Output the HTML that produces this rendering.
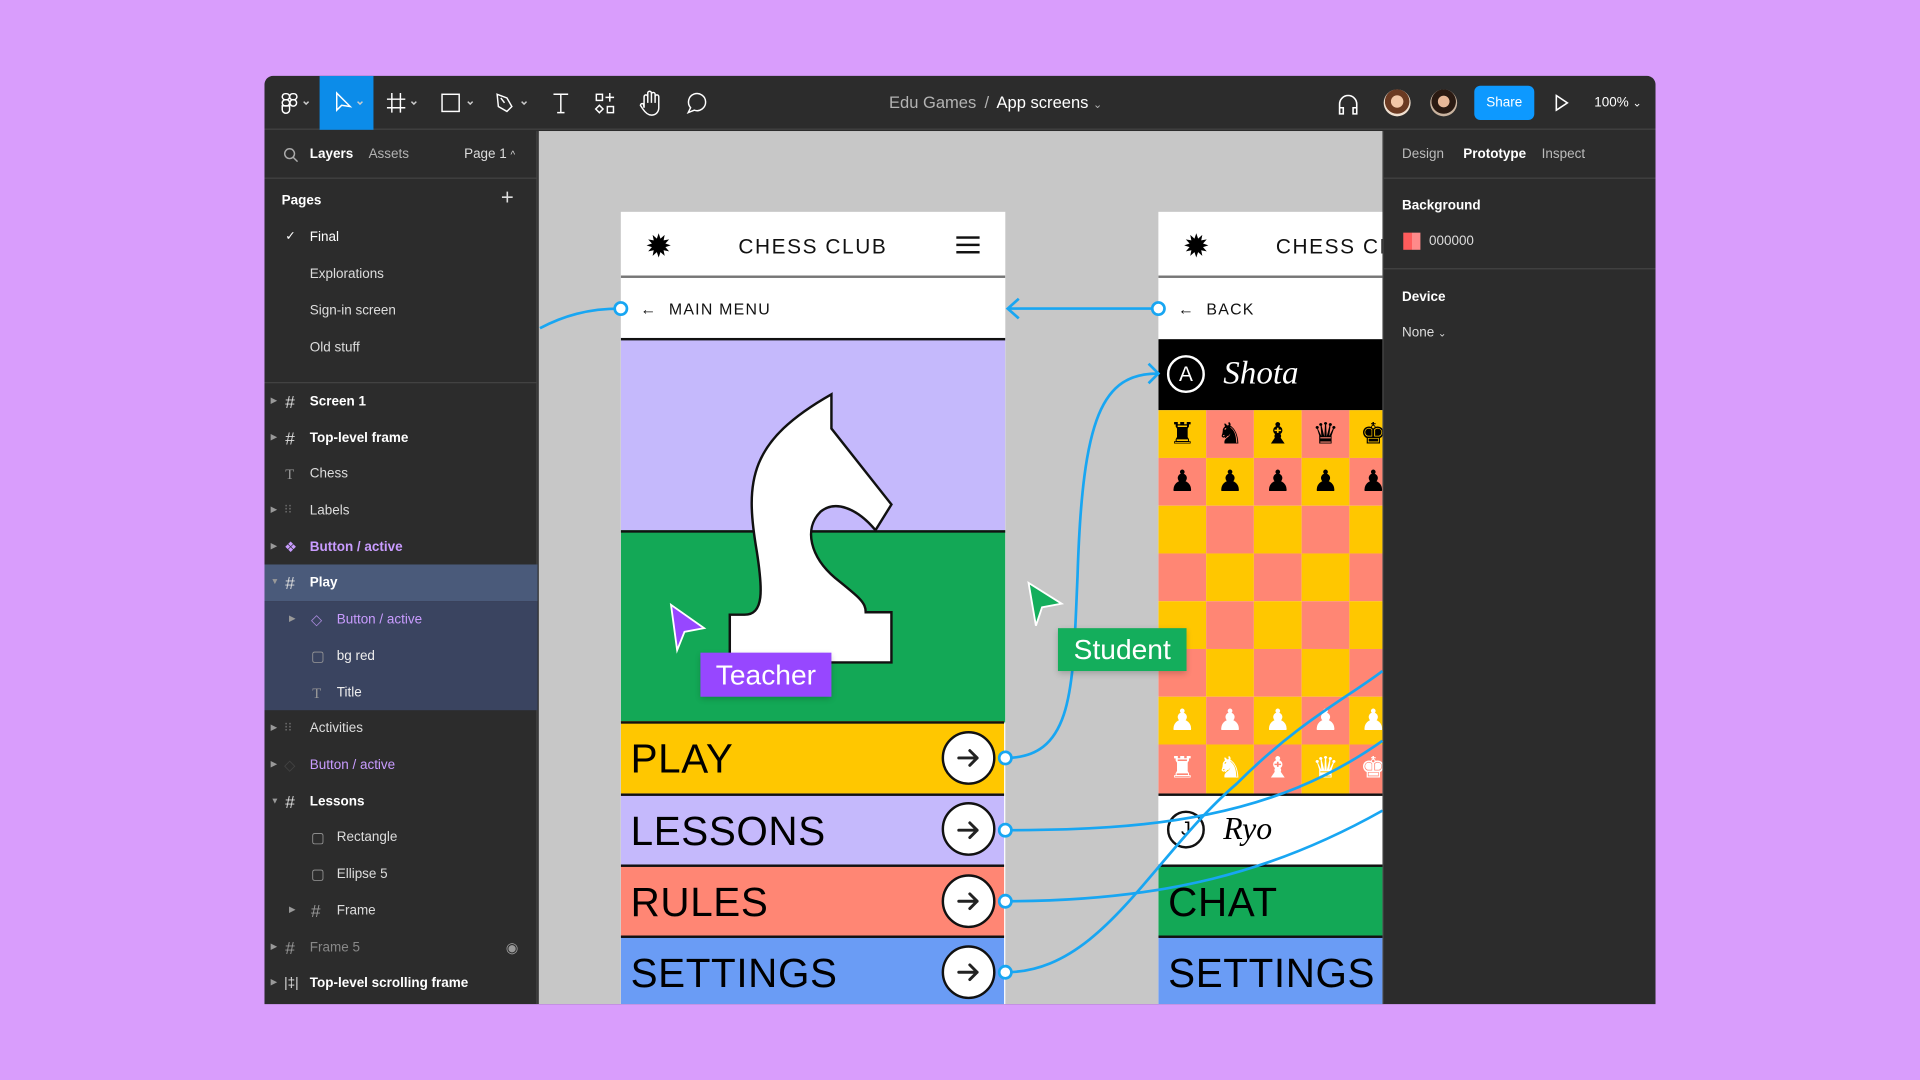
<!DOCTYPE html>
<html><head><meta charset="utf-8"><style>
*{box-sizing:border-box;margin:0;padding:0}
html,body{width:1920px;height:1080px;overflow:hidden;background:#d99dfc}
#s{position:absolute;left:0;top:0;width:1568px;height:882px;transform:scale(1.22449);transform-origin:0 0;font-family:"Liberation Sans",sans-serif}
.a{position:absolute;white-space:nowrap}
.win{left:216px;top:62px;width:1136px;height:758px;background:#2c2c2c;border-radius:7px 7px 0 0;overflow:hidden}
.t{color:#fff;font-size:11px;white-space:nowrap}
.g{color:#b3b3b3}
.b{font-weight:bold}
.p{color:#c99cff}
.row{position:absolute;left:0;width:223px;height:30px;line-height:30px;font-size:11px;color:#fff}
.ico{position:absolute;font-size:12px;color:#999}
.bar{position:absolute;left:0;width:313px;color:#000;font-size:33px;padding-left:8px;border-top:2px solid #111;letter-spacing:0.5px}
.circ{position:absolute;width:44px;height:44px;border-radius:50%;background:#fff;border:2px solid #111}
.sq{position:absolute;width:39px;height:39px;text-align:center;line-height:39px;font-size:24px;font-family:"DejaVu Sans",sans-serif}
</style></head><body><div id="s">
<div class="a win">
 <div class="a" style="left:0;top:0;width:1136px;height:44px;border-bottom:1px solid #444"></div>
 <div class="a" style="left:45px;top:0;width:44px;height:44px;background:#0c8ce9"></div>
 <svg class="a" style="left:0;top:0" width="380" height="44" fill="none" stroke="#fff" stroke-width="1.2">
  <g transform="translate(14,14)"><rect x="0.5" y="0.5" width="6" height="5" rx="2.5"/><rect x="6.5" y="0.5" width="6" height="5" rx="2.5"/><rect x="0.5" y="5.5" width="6" height="5" rx="2.5"/><circle cx="9.5" cy="8" r="2.7"/><path d="M0.5 10.5h6v3a3 3 0 0 1-6 0z"/></g>
  <path d="M32 21l2 2 2-2M76 21l2 2 2-2M120 21l2 2 2-2M166 21l2 2 2-2M210 21l2 2 2-2" stroke="#ccc"/>
  <path d="M59 14l0 14 4-4 7 1z"/>
  <path d="M104 14v16M111 14v16M100 19h15M100 26h15"/>
  <rect x="145" y="15" width="14" height="14"/>
  <path d="M190 15l8 3 4 7-4 4-7-4z M193 18l3 4"/>
  <path d="M236 15h12M242 15v15M239 30h6"/>
  <rect x="271" y="15" width="5" height="5"/><path d="M282 14v7M278.5 17.5h7M273.5 24l3 3-3 3-3-3z"/><rect x="280" y="25" width="5" height="5"/>
  <path d="M310 26v-9a1.5 1.5 0 0 1 3 0v5v-8a1.5 1.5 0 0 1 3 0v8v-7a1.5 1.5 0 0 1 3 0v7v-5a1.5 1.5 0 0 1 3 0v9c0 4-3 6-6 6s-5-2-7-5l-2-3a1.5 1.5 0 0 1 2.5-1z"/>
  <path d="M346 30l2-4a7 7 0 1 1 3 2z"/>
 </svg>
 <div class="a t" style="left:510px;top:14px;font-size:13.5px;color:#b3b3b3">Edu Games <span style="margin:0 3px">/</span> <span style="color:#fff">App screens</span> <span style="font-size:9px">⌄</span></div>
 <svg class="a" style="left:870px;top:10px" width="80" height="26" fill="none" stroke="#fff" stroke-width="1.3"><path d="M8 19v-6a7 7 0 0 1 14 0v6M8 16h3v5h-3zM19 16h3v5h-3z"/></svg>
 <div class="a" style="left:914px;top:11px;width:22px;height:22px;border-radius:50%;background:radial-gradient(circle at 50% 45%,#f2c7a8 0 30%,#6b3a22 32% 60%,#f0e0d0 62%)"></div>
 <div class="a" style="left:952px;top:11px;width:22px;height:22px;border-radius:50%;background:radial-gradient(circle at 50% 45%,#e8b898 0 28%,#2a1a12 30% 60%,#c9b39f 62%)"></div>
 <div class="a t" style="left:988px;top:8px;width:49px;height:28px;background:#0d99ff;border-radius:5px;text-align:center;line-height:28px;font-size:11px">Share</div>
 <svg class="a" style="left:1052px;top:15px" width="14" height="14" fill="none" stroke="#fff" stroke-width="1.3"><path d="M3 1l9 6-9 6z"/></svg>
 <div class="a t" style="left:1086px;top:16px">100% <span style="font-size:9px">⌄</span></div>

 <div class="a" style="left:0;top:45px;width:223px;height:713px;border-right:1px solid #444">
  <svg class="a" style="left:15px;top:13px" width="14" height="14" fill="none" stroke="#aaa" stroke-width="1.2"><circle cx="5.5" cy="5.5" r="4"/><path d="M8.5 8.5l3.5 3.5"/></svg>
  <div class="a t b" style="left:37px;top:13px">Layers</div>
  <div class="a t g" style="left:85px;top:13px">Assets</div>
  <div class="a t" style="left:163px;top:13px;color:#ddd">Page 1 <span style="font-size:8px">^</span></div>
  <div class="a" style="left:0;top:38px;width:223px;border-top:1px solid #444"></div>
  <div class="a t b" style="left:14px;top:51px">Pages</div>
  <div class="a t" style="left:193px;top:44px;font-size:18px;color:#ddd">+</div>
  <div class="a t" style="left:17px;top:81px;font-size:10px">✓</div>
  <div class="a t" style="left:37px;top:81px">Final</div>
  <div class="a t" style="left:37px;top:111px;color:#ddd">Explorations</div>
  <div class="a t" style="left:37px;top:141px;color:#ddd">Sign-in screen</div>
  <div class="a t" style="left:37px;top:171px;color:#ddd">Old stuff</div>
  <div class="a" style="left:0;top:205px;width:223px;border-top:1px solid #444"></div>
 </div>
 <div class="a" style="left:0;top:251px;width:223px">
  <div class="row" style="top:0"><span class="ico" style="left:5px;font-size:7px">▶</span><span class="ico" style="left:17px;color:#ddd;font-size:14px">#</span><span class="a b" style="left:37px">Screen 1</span></div>
  <div class="row" style="top:30px"><span class="ico" style="left:5px;font-size:7px">▶</span><span class="ico" style="left:17px;color:#ddd;font-size:14px">#</span><span class="a b" style="left:37px">Top-level frame</span></div>
  <div class="row" style="top:59px"><span class="ico" style="left:17px;font-family:'Liberation Serif'">T</span><span class="a" style="left:37px;color:#ddd">Chess</span></div>
  <div class="row" style="top:89px"><span class="ico" style="left:5px;font-size:7px">▶</span><span class="ico" style="left:16px;font-size:10px;color:#777">⁝⁝</span><span class="a" style="left:37px;color:#ddd">Labels</span></div>
  <div class="row" style="top:119px"><span class="ico" style="left:5px;font-size:7px">▶</span><span class="ico" style="left:16px;color:#c99cff">❖</span><span class="a b p" style="left:37px">Button / active</span></div>
  <div class="row" style="top:148px;background:#4a5a7a"><span class="ico" style="left:5px;font-size:7px">▼</span><span class="ico" style="left:17px;color:#ddd;font-size:14px">#</span><span class="a b" style="left:37px">Play</span></div>
  <div class="a" style="left:0;top:178px;width:223px;height:89px;background:#3a4460"></div>
  <div class="row" style="top:178px"><span class="ico" style="left:20px;font-size:7px">▶</span><span class="ico" style="left:38px;color:#a98adb">◇</span><span class="a p" style="left:59px">Button / active</span></div>
  <div class="row" style="top:208px"><span class="ico" style="left:38px">▢</span><span class="a" style="left:59px;color:#eee">bg red</span></div>
  <div class="row" style="top:238px"><span class="ico" style="left:39px;font-family:'Liberation Serif'">T</span><span class="a" style="left:59px;color:#eee">Title</span></div>
  <div class="row" style="top:267px"><span class="ico" style="left:5px;font-size:7px">▶</span><span class="ico" style="left:16px;font-size:10px;color:#777">⁝⁝</span><span class="a" style="left:37px;color:#ddd">Activities</span></div>
  <div class="row" style="top:297px"><span class="ico" style="left:5px;font-size:7px">▶</span><span class="ico" style="left:16px;color:#444">◇</span><span class="a p" style="left:37px">Button / active</span></div>
  <div class="row" style="top:327px"><span class="ico" style="left:5px;font-size:7px">▼</span><span class="ico" style="left:17px;color:#ddd;font-size:14px">#</span><span class="a b" style="left:37px">Lessons</span></div>
  <div class="row" style="top:356px"><span class="ico" style="left:38px">▢</span><span class="a" style="left:59px;color:#ddd">Rectangle</span></div>
  <div class="row" style="top:386px"><span class="ico" style="left:38px">▢</span><span class="a" style="left:59px;color:#ddd">Ellipse 5</span></div>
  <div class="row" style="top:416px"><span class="ico" style="left:20px;font-size:7px">▶</span><span class="ico" style="left:38px;font-size:14px">#</span><span class="a" style="left:59px;color:#ddd">Frame</span></div>
  <div class="row" style="top:446px"><span class="ico" style="left:5px;font-size:7px">▶</span><span class="ico" style="left:17px;font-size:14px">#</span><span class="a" style="left:37px;color:#888">Frame 5</span><span class="ico" style="left:197px;color:#999">◉</span></div>
  <div class="row" style="top:475px"><span class="ico" style="left:5px;font-size:7px">▶</span><span class="ico" style="left:16px;color:#ddd;font-size:11px">|‡|</span><span class="a b" style="left:37px">Top-level scrolling frame</span></div>
 </div>

 <div class="a" style="left:224px;top:45px;width:689px;height:713px;background:#c7c7c7;overflow:hidden">
  <div class="a" style="left:67px;top:66px;width:314px;height:650px;background:#fff;overflow:hidden">
   <div class="a" style="left:20px;top:17px;font-size:26px;line-height:22px;color:#000">✹</div>
   <div class="a" style="left:96px;top:19px;font-size:17px;letter-spacing:1.3px;color:#111">CHESS CLUB</div>
   <div class="a" style="left:274px;top:20px;width:19px;height:14px;border-top:2px solid #111;border-bottom:2px solid #111"><div style="margin-top:4px;border-top:2px solid #111"></div></div>
   <div class="a" style="left:0;top:52px;width:314px;border-top:2px solid #777"></div>
   <div class="a" style="left:16px;top:72px;font-size:13px;letter-spacing:1px;color:#111">←&nbsp; MAIN MENU</div>
   <div class="a" style="left:0;top:103px;width:314px;height:157px;background:#c5b9fc;border-top:2px solid #111"></div>
   <div class="a" style="left:0;top:260px;width:314px;height:157px;background:#13a856;border-top:2px solid #111"></div>
   <div class="bar" style="top:416px;height:59px;background:#ffc700;line-height:58px">PLAY</div>
   <div class="bar" style="top:475px;height:59px;background:#c5b9fc;line-height:58px">LESSONS</div>
   <div class="bar" style="top:533px;height:59px;background:#ff8674;line-height:58px">RULES</div>
   <div class="bar" style="top:591px;height:60px;background:#6a9cf5;line-height:58px">SETTINGS</div>
   <div class="circ" style="left:262px;top:424px"></div>
   <div class="circ" style="left:262px;top:482px"></div>
   <div class="circ" style="left:262px;top:541px"></div>
   <div class="circ" style="left:262px;top:599px"></div>
  </div>
  <div class="a" style="left:506px;top:66px;width:190px;height:650px;background:#fff;overflow:hidden">
   <div class="a" style="left:20px;top:17px;font-size:26px;line-height:22px;color:#000">✹</div>
   <div class="a" style="left:96px;top:19px;font-size:17px;letter-spacing:1.3px;color:#111">CHESS CLUB</div>
   <div class="a" style="left:0;top:52px;width:190px;border-top:2px solid #777"></div>
   <div class="a" style="left:16px;top:72px;font-size:13px;letter-spacing:1px;color:#111">←&nbsp; BACK</div>
   <div class="a" style="left:0;top:104px;width:190px;height:58px;background:#000"></div>
   <div class="a" style="left:7px;top:117px;width:31px;height:31px;border:2px solid #fff;border-radius:50%;color:#fff;text-align:center;line-height:27px;font-size:17px">A</div>
   <div class="a" style="left:53px;top:116px;color:#fff;font-size:27px;font-style:italic;font-family:'Liberation Serif',serif">Shota</div>
   <div class="a" id="board" style="left:0;top:162px;width:195px;height:313px"></div>
   <div class="a" style="left:0;top:475px;width:190px;height:58px;background:#fff;border-top:2px solid #111"></div>
   <div class="a" style="left:7px;top:489px;width:31px;height:31px;border:2px solid #111;border-radius:50%;text-align:center;line-height:27px;font-size:16px">J</div>
   <div class="a" style="left:53px;top:489px;font-size:26px;font-style:italic;font-family:'Liberation Serif',serif">Ryo</div>
   <div class="bar" style="top:533px;height:59px;background:#13a856;line-height:58px">CHAT</div>
   <div class="bar" style="top:591px;height:60px;background:#6a9cf5;line-height:58px">SETTINGS</div>
  </div>
 </div>
 <div class="a" style="left:913px;top:45px;width:223px;height:713px;border-left:1px solid #444">
  <div class="a t" style="left:15px;top:13px;color:#bbb">Design</div>
  <div class="a t b" style="left:65px;top:13px">Prototype</div>
  <div class="a t" style="left:129px;top:13px;color:#bbb">Inspect</div>
  <div class="a" style="left:0;top:38px;width:223px;border-top:1px solid #444"></div>
  <div class="a t b" style="left:15px;top:55px">Background</div>
  <div class="a" style="left:16px;top:83px;width:14px;height:14px;background:linear-gradient(90deg,#ff5c5c 50%,#ff8a8a 50%)"></div>
  <div class="a t" style="left:37px;top:84px;color:#ddd">000000</div>
  <div class="a" style="left:0;top:112px;width:223px;border-top:1px solid #444"></div>
  <div class="a t b" style="left:15px;top:130px">Device</div>
  <div class="a t" style="left:15px;top:159px;color:#ddd">None <span style="font-size:8px">⌄</span></div>
 </div>
</div>

<svg class="a" style="left:0;top:0" width="1568" height="882">
 <path d="M679,322 L679,350 L728,412 L715,433 C700,415 682,408 670,418 C656,432 662,455 682,472 C702,488 707,492 707,500 L728,500 L728,541 L596,541 L596,502 L608,502 C624,502 623,482 618,450 C608,392 612,360 679,322 Z" fill="#fff" stroke="#111" stroke-width="2"/>
 <g fill="none" stroke="#222" stroke-width="2.4" stroke-linecap="round" stroke-linejoin="round">
  <path d="M783,619h15M792,613l6,6-6,6"/>
  <path d="M783,678h15M792,672l6,6-6,6"/>
  <path d="M783,736h15M792,730l6,6-6,6"/>
  <path d="M783,794h15M792,788l6,6-6,6"/>
 </g>
 <g fill="none" stroke="#18a6f2" stroke-width="2.2">
  <path d="M441,268 C460,258 480,252 507,252"/>
  <path d="M946,252 L823,252 M832,244 L823,252 L832,260"/>
  <path d="M821,619 C878,619 876,560 880,470 C884,340 900,305 946,305 M938,297 L946,305 L938,313"/>
  <path d="M821,678 C940,678 1040,668 1129,605"/>
  <path d="M821,736 C950,736 1040,712 1129,662"/>
  <path d="M821,794 C900,794 940,700 1010,640 C1060,590 1100,570 1129,548"/>
 </g>
 <g fill="#fff" stroke="#18a6f2" stroke-width="2.2">
  <circle cx="507" cy="252" r="5"/><circle cx="946" cy="252" r="5"/>
  <circle cx="821" cy="619" r="5"/><circle cx="821" cy="678" r="5"/><circle cx="821" cy="736" r="5"/><circle cx="821" cy="794" r="5"/>
 </g>
 <path d="M548,494 L575,513 L559,516 L553,531 Z" fill="#9747ff" stroke="#fff" stroke-width="1.5"/>
 <path d="M840,476 L867,493 L851,496 L846,511 Z" fill="#14ae5c" stroke="#fff" stroke-width="1.5"/>
</svg>
<div class="a" style="left:572px;top:533px;width:107px;height:36px;background:#9747ff;color:#fff;font-size:23px;text-align:center;line-height:36px;box-shadow:0 2px 5px rgba(0,0,0,.2)">Teacher</div>
<div class="a" style="left:864px;top:513px;width:105px;height:35px;background:#14ae5c;color:#fff;font-size:23px;text-align:center;line-height:35px;box-shadow:0 2px 5px rgba(0,0,0,.2)">Student</div>
</div>
<script>
(function(){
var b=document.getElementById('board'),Y='#ffc700',S='#ff8674',h='';
var pcs=['\u265C','\u265E','\u265D','\u265B','\u265A'];
for(var r=0;r<8;r++)for(var c=0;c<5;c++){var col=((r+c)%2==0)?Y:S;var t='',cl='#000';
if(r==0)t=pcs[c];if(r==1)t='\u265F';if(r==6){t='\u265F';cl='#fff'}if(r==7){t=pcs[c];cl='#fff'}
h+='<div class="sq" style="left:'+(c*39)+'px;top:'+(r*39)+'px;height:'+(r==7?40:39)+'px;background:'+col+';color:'+cl+'">'+t+'</div>';}
b.innerHTML=h;
})();
</script>
</body></html>
